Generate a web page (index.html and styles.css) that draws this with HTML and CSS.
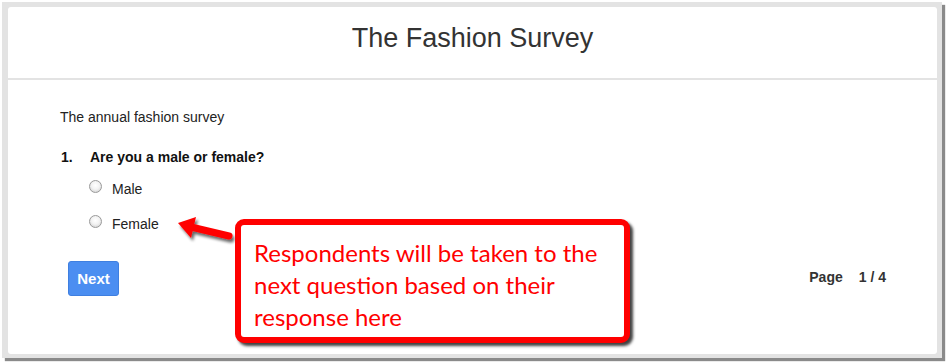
FILE: index.html
```html
<!DOCTYPE html>
<html>
<head>
<meta charset="utf-8">
<link rel="stylesheet" href="styles.css">
</head>
<body>
<div class="frame">
  <div class="card">
    <header class="head"><h1 class="title">The Fashion Survey</h1></header>
    <main class="content">
      <p class="intro">The annual fashion survey</p>
      <div class="question"><span class="qnum">1.</span><span class="qtext">Are you a male or female?</span></div>
      <ul class="options">
        <li class="opt"><span class="radio"></span><span>Male</span></li>
        <li class="opt"><span class="radio"></span><span>Female</span></li>
      </ul>
      <div class="footer">
        <button class="next">Next</button>
        <div class="page"><span>Page</span><span class="pnum">1 / 4</span></div>
      </div>
    </main>
  </div>
</div>
<svg class="arrow" width="70" height="34" viewBox="0 0 70 34">
  <defs>
    <filter id="sh" x="-20%" y="-20%" width="150%" height="160%">
      <feGaussianBlur in="SourceAlpha" stdDeviation="1.4"/>
      <feOffset dx="2" dy="3" result="b"/>
      <feComponentTransfer><feFuncA type="linear" slope="0.6"/></feComponentTransfer>
      <feMerge><feMergeNode/><feMergeNode in="SourceGraphic"/></feMerge>
    </filter>
  </defs>
  <g filter="url(#sh)">
    <line x1="18" y1="12" x2="56" y2="21" stroke="#ff0000" stroke-width="7" stroke-linecap="round"/>
    <polygon points="5,8 23,2 18,23" fill="#ff0000"/>
  </g>
</svg>
<div class="callout">Respondents will be taken to the next question based on their response here</div>
</body>
</html>
```
FILE: styles.css
```css
html, body { margin: 0; padding: 0; background: #fff; }
body { width: 950px; height: 363px; position: relative; overflow: hidden; font-family: Arial, "Liberation Sans", sans-serif; }
.frame {
  margin: 2px 0 0 2px;
  width: 929px;
  height: 347px;
  padding: 5px 5px 4px 6px;
  background: #e3e3e3;
  box-shadow: 3px 3px 1px #8a8a8a;
}
.card {
  background: #fff;
  height: 347px;
  border-radius: 3px;
  display: flex;
  flex-direction: column;
}
.head {
  height: 71px;
  border-bottom: 2px solid #e3e3e3;
  display: flex;
  align-items: center;
  justify-content: center;
}
.title {
  margin: 0;
  font-weight: normal;
  font-size: 27px;
  color: #333;
  margin-top: -8px;
}
.content { padding: 28px 0 0 52px; color: #222; }
.intro { margin: 0; font-size: 14px; line-height: 18px; }
.question { margin-top: 23px; font-size: 14px; font-weight: bold; display: flex; color: #111; }
.qnum { width: 29px; padding-left: 1px; }
.options { list-style: none; margin: 15px 0 0 29px; padding: 0; }
.opt { display: flex; align-items: center; font-size: 14px; height: 18px; margin-bottom: 17px; }
.radio {
  border-radius: 50%;
  border: 1px solid #9a9a9a;
  background: radial-gradient(circle at 50% 40%, #fff 0%, #f3f3f3 45%, #c9c9c9 100%);
  margin-right: 10px;
  box-sizing: border-box;
  width: 13px; height: 13px;
  position: relative; top: -3px;
}
.footer { display: flex; justify-content: space-between; align-items: center; margin-top: 28px; padding-left: 8px; width: 827px; box-sizing: border-box; }
.next {
  width: 51px; height: 35px;
  background: #4b8ef1;
  border: 1px solid #3f7fe0;
  border-radius: 3px;
  color: #fff;
  font-family: Arial, "Liberation Sans", sans-serif;
  font-weight: bold;
  font-size: 15px;
  padding: 0;
}
.page { font-size: 14px; font-weight: bold; color: #333; display: flex; gap: 16px; margin-top: -3px; margin-right: 1px; }
.arrow { position: absolute; left: 173px; top: 215px; }
.callout {
  position: absolute;
  left: 235px; top: 219px;
  width: 395px; height: 124px;
  border: 6px solid #ff0000;
  border-radius: 9px;
  background: #fff;
  box-shadow: 3px 3px 3px rgba(0,0,0,0.75);
  color: #ff0000;
  font-family: Lato, "Open Sans", sans-serif;
  font-size: 24px;
  line-height: 32px;
  padding: 12px 10px 0 13px;
  box-sizing: border-box;
}
```
